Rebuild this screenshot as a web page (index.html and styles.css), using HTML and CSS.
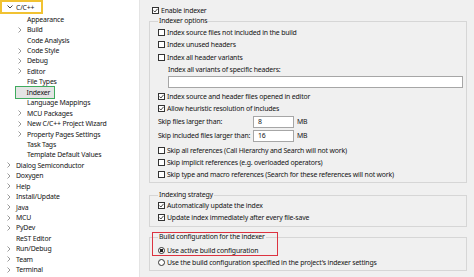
FILE: index.html
```html
<!DOCTYPE html>
<html>
<head>
<meta charset="utf-8">
<link rel="stylesheet" href="styles.css">
</head>
<body>
<div class="win">
  <nav class="tree">
    <div class="node root"><span class="chev"><svg width="6" height="4" viewBox="0 0 6 4"><polyline points="0.5,0.5 3,3 5.5,0.5" fill="none" stroke="#444" stroke-width="1"/></svg></span><span>C/C++</span></div>
    <div class="node l1"><span class="chev"></span><span>Appearance</span></div>
    <div class="node l1"><span class="chev"><svg width="4" height="6" viewBox="0 0 4 6"><polyline points="0.5,0.5 3,3 0.5,5.5" fill="none" stroke="#9a9a9a" stroke-width="1"/></svg></span><span>Build</span></div>
    <div class="node l1"><span class="chev"></span><span>Code Analysis</span></div>
    <div class="node l1"><span class="chev"><svg width="4" height="6" viewBox="0 0 4 6"><polyline points="0.5,0.5 3,3 0.5,5.5" fill="none" stroke="#9a9a9a" stroke-width="1"/></svg></span><span>Code Style</span></div>
    <div class="node l1"><span class="chev"><svg width="4" height="6" viewBox="0 0 4 6"><polyline points="0.5,0.5 3,3 0.5,5.5" fill="none" stroke="#9a9a9a" stroke-width="1"/></svg></span><span>Debug</span></div>
    <div class="node l1"><span class="chev"><svg width="4" height="6" viewBox="0 0 4 6"><polyline points="0.5,0.5 3,3 0.5,5.5" fill="none" stroke="#9a9a9a" stroke-width="1"/></svg></span><span>Editor</span></div>
    <div class="node l1"><span class="chev"></span><span>File Types</span></div>
    <div class="node l1"><span class="chev"></span><span class="sel">Indexer</span></div>
    <div class="node l1"><span class="chev"></span><span>Language Mappings</span></div>
    <div class="node l1"><span class="chev"><svg width="4" height="6" viewBox="0 0 4 6"><polyline points="0.5,0.5 3,3 0.5,5.5" fill="none" stroke="#9a9a9a" stroke-width="1"/></svg></span><span>MCU Packages</span></div>
    <div class="node l1"><span class="chev"><svg width="4" height="6" viewBox="0 0 4 6"><polyline points="0.5,0.5 3,3 0.5,5.5" fill="none" stroke="#9a9a9a" stroke-width="1"/></svg></span><span>New C/C++ Project Wizard</span></div>
    <div class="node l1"><span class="chev"><svg width="4" height="6" viewBox="0 0 4 6"><polyline points="0.5,0.5 3,3 0.5,5.5" fill="none" stroke="#9a9a9a" stroke-width="1"/></svg></span><span>Property Pages Settings</span></div>
    <div class="node l1"><span class="chev"></span><span>Task Tags</span></div>
    <div class="node l1"><span class="chev"></span><span>Template Default Values</span></div>
    <div class="node l0"><span class="chev"><svg width="4" height="6" viewBox="0 0 4 6"><polyline points="0.5,0.5 3,3 0.5,5.5" fill="none" stroke="#9a9a9a" stroke-width="1"/></svg></span><span>Dialog Semiconductor</span></div>
    <div class="node l0"><span class="chev"><svg width="4" height="6" viewBox="0 0 4 6"><polyline points="0.5,0.5 3,3 0.5,5.5" fill="none" stroke="#9a9a9a" stroke-width="1"/></svg></span><span>Doxygen</span></div>
    <div class="node l0"><span class="chev"><svg width="4" height="6" viewBox="0 0 4 6"><polyline points="0.5,0.5 3,3 0.5,5.5" fill="none" stroke="#9a9a9a" stroke-width="1"/></svg></span><span>Help</span></div>
    <div class="node l0"><span class="chev"><svg width="4" height="6" viewBox="0 0 4 6"><polyline points="0.5,0.5 3,3 0.5,5.5" fill="none" stroke="#9a9a9a" stroke-width="1"/></svg></span><span>Install/Update</span></div>
    <div class="node l0"><span class="chev"><svg width="4" height="6" viewBox="0 0 4 6"><polyline points="0.5,0.5 3,3 0.5,5.5" fill="none" stroke="#9a9a9a" stroke-width="1"/></svg></span><span>Java</span></div>
    <div class="node l0"><span class="chev"><svg width="4" height="6" viewBox="0 0 4 6"><polyline points="0.5,0.5 3,3 0.5,5.5" fill="none" stroke="#9a9a9a" stroke-width="1"/></svg></span><span>MCU</span></div>
    <div class="node l0"><span class="chev"><svg width="4" height="6" viewBox="0 0 4 6"><polyline points="0.5,0.5 3,3 0.5,5.5" fill="none" stroke="#9a9a9a" stroke-width="1"/></svg></span><span>PyDev</span></div>
    <div class="node l0"><span class="chev"></span><span>ReST Editor</span></div>
    <div class="node l0"><span class="chev"><svg width="4" height="6" viewBox="0 0 4 6"><polyline points="0.5,0.5 3,3 0.5,5.5" fill="none" stroke="#9a9a9a" stroke-width="1"/></svg></span><span>Run/Debug</span></div>
    <div class="node l0"><span class="chev"><svg width="4" height="6" viewBox="0 0 4 6"><polyline points="0.5,0.5 3,3 0.5,5.5" fill="none" stroke="#9a9a9a" stroke-width="1"/></svg></span><span>Team</span></div>
    <div class="node l0"><span class="chev"><svg width="4" height="6" viewBox="0 0 4 6"><polyline points="0.5,0.5 3,3 0.5,5.5" fill="none" stroke="#9a9a9a" stroke-width="1"/></svg></span><span>Terminal</span></div>
  </nav>

  <main class="panel">
    <div class="row enable"><span class="cb on"><svg width="5" height="5" viewBox="0 0 5 5"><polyline points="0.4,2.5 1.9,4 4.6,0.8" fill="none" stroke="#333" stroke-width="0.9"/></svg></span><span>Enable indexer</span></div>

    <fieldset class="grp g1">
      <legend>Indexer options</legend>
      <div class="row"><span class="cb"></span><span>Index source files not included in the build</span></div>
      <div class="row"><span class="cb"></span><span>Index unused headers</span></div>
      <div class="row"><span class="cb"></span><span>Index all header variants</span></div>
      <div class="row sub"><span>Index all variants of specific headers:</span></div>
      <div class="field wide"></div>
      <div class="row"><span class="cb on"><svg width="5" height="5" viewBox="0 0 5 5"><polyline points="0.4,2.5 1.9,4 4.6,0.8" fill="none" stroke="#333" stroke-width="0.9"/></svg></span><span>Index source and header files opened in editor</span></div>
      <div class="row"><span class="cb on"><svg width="5" height="5" viewBox="0 0 5 5"><polyline points="0.4,2.5 1.9,4 4.6,0.8" fill="none" stroke="#333" stroke-width="0.9"/></svg></span><span>Allow heuristic resolution of includes</span></div>
      <div class="row size"><span class="lbl">Skip files larger than:</span><span class="field num">8</span><span class="unit">MB</span></div>
      <div class="row size"><span class="lbl">Skip included files larger than:</span><span class="field num">16</span><span class="unit">MB</span></div>
      <div class="skips">
        <div class="row tight"><span class="cb"></span><span>Skip all references (Call Hierarchy and Search will not work)</span></div>
        <div class="row tight"><span class="cb"></span><span>Skip implicit references (e.g. overloaded operators)</span></div>
        <div class="row tight"><span class="cb"></span><span>Skip type and macro references (Search for these references will not work)</span></div>
      </div>
    </fieldset>

    <fieldset class="grp g2">
      <legend>Indexing strategy</legend>
      <div class="row mid"><span class="cb on"><svg width="5" height="5" viewBox="0 0 5 5"><polyline points="0.4,2.5 1.9,4 4.6,0.8" fill="none" stroke="#333" stroke-width="0.9"/></svg></span><span>Automatically update the index</span></div>
      <div class="row mid"><span class="cb on"><svg width="5" height="5" viewBox="0 0 5 5"><polyline points="0.4,2.5 1.9,4 4.6,0.8" fill="none" stroke="#333" stroke-width="0.9"/></svg></span><span>Update index immediately after every file-save</span></div>
    </fieldset>

    <fieldset class="grp g3">
      <legend>Build configuration for the indexer</legend>
      <div class="row mid first"><span class="rb on"></span><span>Use active build configuration</span></div>
      <div class="row mid"><span class="rb"></span><span>Use the build configuration specified in the project's indexer settings</span></div>
    </fieldset>

    <div class="callout"></div>
  </main>
</div>
</body>
</html>
```

FILE: styles.css
```css
* { box-sizing: border-box; }
html, body { margin: 0; padding: 0; }
body {
  width: 474px;
  height: 277px;
  overflow: hidden;
  background: #fff;
  font-family: "Noto Sans", "Open Sans", sans-serif;
  font-size: 6.9px;
  letter-spacing: -0.17px;
  color: #141414;
}
.win { display: flex; height: 277px; }

/* tree */
.tree {
  width: 140px;
  flex: none;
  background: #fff;
  border-right: 1px solid #e4e4e4;
}
.node {
  display: flex;
  align-items: center;
  height: 10.45px;
  white-space: nowrap;
}
.l0 { padding-left: 7px; }
.l1 { padding-left: 18px; }
.chev { width: 9px; flex: none; display: flex; align-items: center; }
.chev svg { display: block; }
.root {
  width: 43px;
  height: 14px;
  border: 2px solid #f1c232;
  padding-left: 5px;
  color: #222;
}
.sel {
  display: flex;
  align-items: center;
  height: 13.5px;
  margin-left: -12px;
  padding: 0 4px 0 10.5px;
  background: #e4e4e4;
  border: 1.5px solid #3fab5e;
}

/* panel */
.panel {
  position: relative;
  flex: 1;
  background: #f0f0f0;
  padding: 4px 7px 0 9px;
}
.row {
  display: flex;
  align-items: center;
  gap: 2px;
  height: 12.5px;
  white-space: nowrap;
}
.enable { height: 12px; padding-left: 3px; }
.cb {
  width: 7px;
  height: 7px;
  flex: none;
  border: 1px solid #333;
  background: #fff;
  display: flex;
  align-items: center;
  justify-content: center;
}
.cb svg { display: block; }
.rb {
  width: 7px;
  height: 7px;
  flex: none;
  border: 1px solid #333;
  border-radius: 50%;
  background: #fff;
}
.rb.on { background: radial-gradient(circle, #222 0 1.5px, #fff 2px); }

.grp {
  margin: 0;
  min-width: 0;
  border: 1px solid #d6d6d6;
  padding: 0 0 2px 8px;
}
.grp legend {
  padding: 0 1px;
  height: 10px;
  line-height: 10px;
}
.sub { padding-left: 10px; }
.field {
  background: #fff;
  border: 1px solid #a6a6a6;
  display: flex;
  align-items: center;
}
.wide {
  height: 12px;
  margin: 0 3px 1.75px 10px;
}
.size { height: 14px; gap: 0; }
.lbl { width: 95px; flex: none; }
.num {
  width: 41px;
  height: 11.5px;
  padding-left: 4px;
}
.unit { margin-left: 3px; }
.skips { margin-top: 2.25px; }
.tight { height: 11.7px; }

.g2 { margin-top: 7px; padding-bottom: 3px; }
.g3 { margin-top: 5px; padding-bottom: 2px; }
.mid { height: 11.5px; }
.first { margin-top: 3.15px; }

.callout {
  position: absolute;
  left: 12px;
  top: 232px;
  width: 126px;
  height: 24px;
  border: 1.5px solid #dc3340;
}
```
